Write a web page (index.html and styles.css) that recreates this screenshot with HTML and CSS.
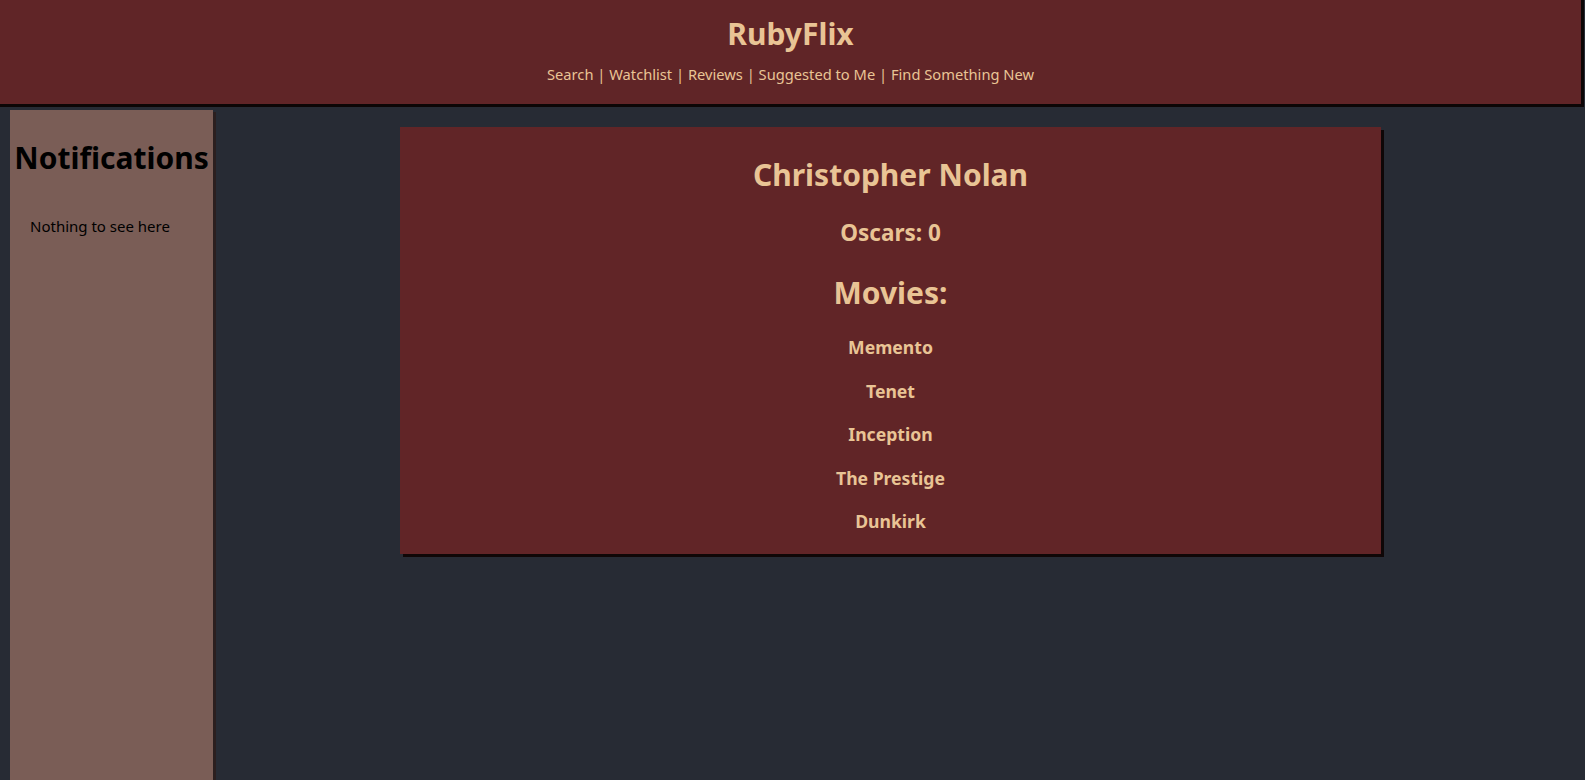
FILE: index.html
```html
<!DOCTYPE html>
<html lang="en">
<head>
  <meta charset="UTF-8">
  <title>RubyFlix - Christopher Nolan</title>
  <link rel="stylesheet" href="styles.css">
</head>
<body>

<header class="topbar">
  <h1 class="brand">RubyFlix</h1>
  <nav class="links">
    <a href="#">Search</a> | <a href="#">Watchlist</a> | <a href="#">Reviews</a> | <a href="#">Suggested to Me</a> | <a href="#">Find Something New</a>
  </nav>
</header>

<div class="layout">
  <aside class="sidebar">
    <h1>Notifications</h1>
    <p class="empty">Nothing to see here</p>
  </aside>

  <main class="content">
    <section class="card">
      <h1 class="name">Christopher Nolan</h1>
      <h2 class="oscars">Oscars: 0</h2>
      <h1 class="movies-title">Movies:</h1>
      <h3 class="movie">Memento</h3>
      <h3 class="movie">Tenet</h3>
      <h3 class="movie">Inception</h3>
      <h3 class="movie">The Prestige</h3>
      <h3 class="movie">Dunkirk</h3>
    </section>
  </main>
</div>

</body>
</html>
```

FILE: styles.css
```css
body {
  margin: 0;
  font-family: 'Noto Sans', 'Open Sans', sans-serif;
  background-color: #272b34;
  color: #e9c495;
  overflow: hidden;
}
.topbar {
  background-color: #602527;
  text-align: center;
  height: 107px;
  margin-right: 1px;
  border-right: 3px solid #0c0606;
  border-bottom: 3px solid #0c0606;
  padding-top: 14px;
  box-sizing: border-box;
}
.brand {
  margin: 0;
  font-size: 30px;
  line-height: 40px;
}
.links {
  margin-top: 10px;
  font-size: 14.7px;
  line-height: 20px;
}
.links a {
  color: #e9c495;
  text-decoration: none;
}
.layout {
  display: flex;
  align-items: flex-start;
}
.sidebar {
  width: 203px;
  min-height: 700px;
  margin: 3px 0 0 10px;
  background-color: #7a5d56;
  color: #000;
  text-align: center;
  box-shadow: 3px 2px 0 #2b1f1f;
}
.sidebar h1 {
  font-size: 30px;
  margin: 27px 0 0;
  line-height: 42px;
}
.empty {
  text-align: left;
  padding-left: 20px;
  font-size: 15px;
  margin-top: 37px;
}
.content {
  flex: 1;
}
.card {
  display: flow-root;
  width: 981px;
  margin: 20px 0 0 187px;
  background-color: #612527;
  text-align: center;
  box-shadow: 3px 3px 0 #0f0707;
}
.name {
  font-size: 30px;
  margin: 27px 0 0;
  line-height: 42px;
}
.oscars {
  font-size: 22.5px;
  margin: 22px 0 0;
  line-height: 30px;
}
.movies-title {
  font-size: 30px;
  margin: 24px 0 0;
  line-height: 42px;
}
.movie {
  font-size: 17.6px;
  margin: 18.5px 0;
  line-height: 25px;
}
.movies-title + .movie {
  margin-top: 21px;
}
.movie:last-child {
  margin-bottom: 20px;
}
```
